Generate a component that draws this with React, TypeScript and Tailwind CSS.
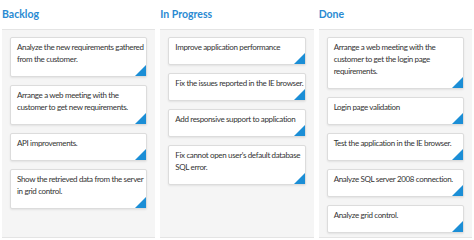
import React from 'react';

const columns = [
  {
    title: 'Backlog',
    cards: [
      'Analyze the new requirements gathered from the customer.',
      'Arrange a web meeting with the customer to get new requirements.',
      'API improvements.',
      'Show the retrieved data from the server in grid control.',
    ],
  },
  {
    title: 'In Progress',
    cards: [
      'Improve application performance',
      'Fix the issues reported in the IE browser.',
      'Add responsive support to application',
      "Fix cannot open user's default database SQL error.",
    ],
  },
  {
    title: 'Done',
    cards: [
      'Arrange a web meeting with the customer to get the login page requirements.',
      'Login page validation',
      'Test the application in the IE browser.',
      'Analyze SQL server 2008 connection.',
      'Analyze grid control.',
    ],
  },
];

const Card = ({ text }: { text: string }) => (
  <div className="relative bg-white border border-[#dcdcdc] rounded-[2px] shadow-[0_1px_2px_rgba(0,0,0,0.08)] pl-[6px] pt-[3px] pb-[11px]">
    <p className="text-[8px] leading-[12px] tracking-[-0.35px] text-[#333]">{text}</p>
    <div className="absolute right-0 bottom-0 w-0 h-0 border-l-[11px] border-l-transparent border-b-[11px] border-b-[#1b8ed6]" />
  </div>
);

export default function App() {
  return (
    <div className="w-[474px] h-[240px] bg-white flex gap-[5px] px-[2px] font-['Lato',sans-serif]">
      {columns.map((col) => (
        <div key={col.title} className="flex-1 flex flex-col">
          <div className="h-[29px] flex items-center">
            <h3 className="text-[10.5px] font-bold text-[#2a8ad2] leading-none">{col.title}</h3>
          </div>
          <div className="h-[209px] bg-[#f5f5f5] border-t border-[#e4e4e4] border-b px-[8px] pt-[7px] flex flex-col gap-[8px]">
            {col.cards.map((c) => (
              <Card key={c} text={c} />
            ))}
          </div>
        </div>
      ))}
    </div>
  );
}
